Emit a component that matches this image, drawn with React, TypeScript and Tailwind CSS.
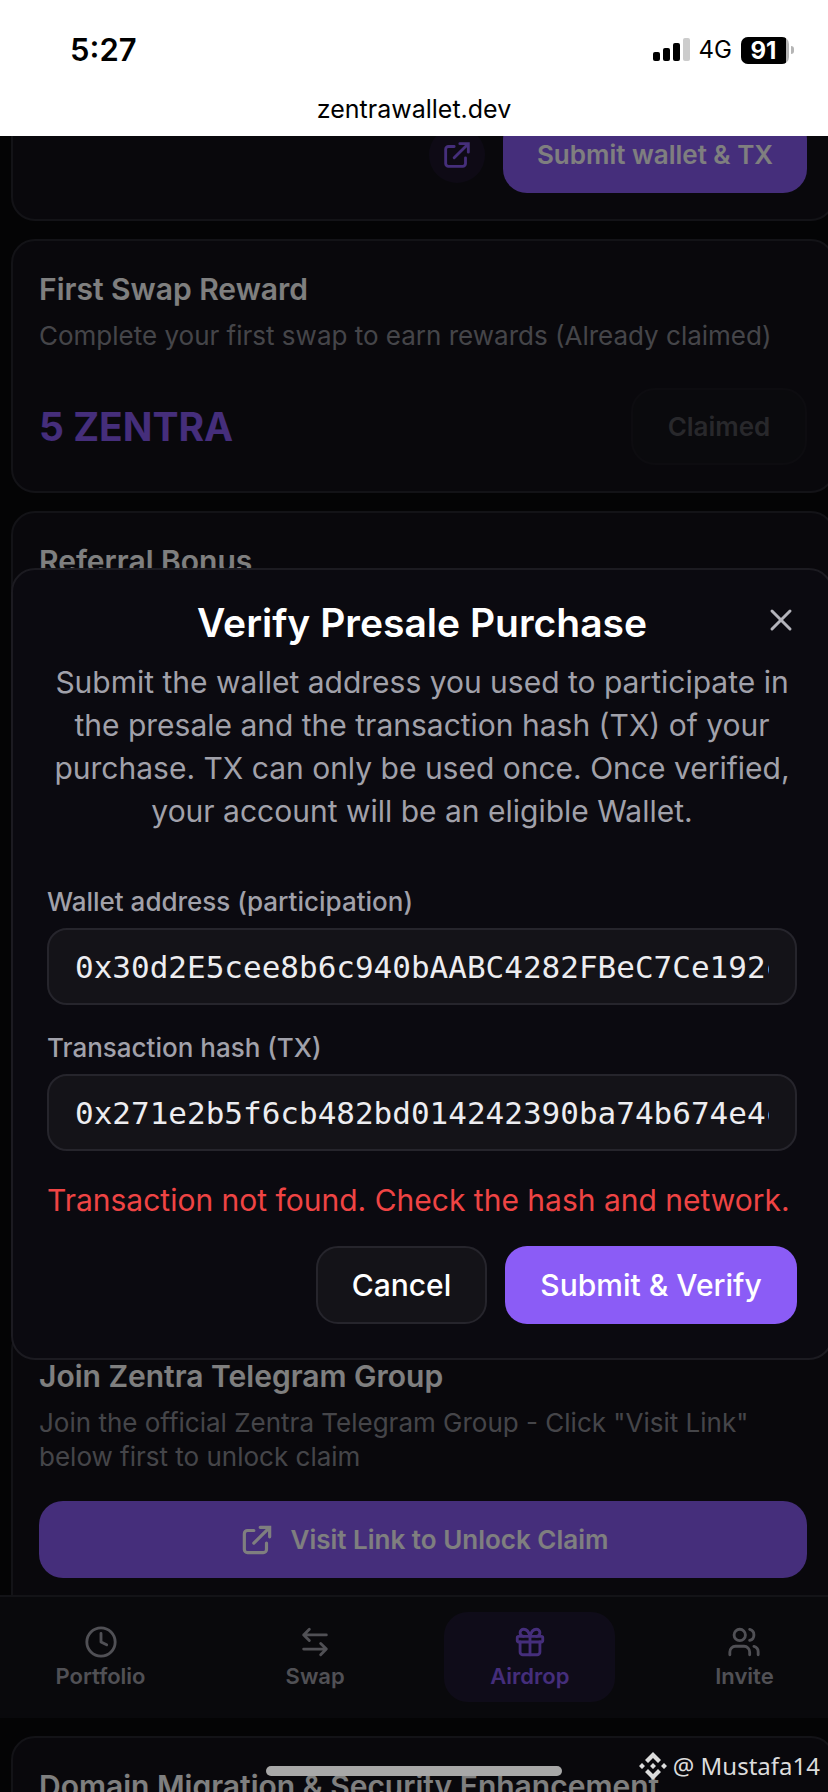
import type { ReactNode } from 'react';
import { Clock, Gift, Users, X } from 'lucide-react';

const FIELDS = [
  { id: 'wallet', label: 'Wallet address (participation)', value: '0x30d2E5cee8b6c940bAABC4282FBeC7Ce192c' },
  { id: 'tx', label: 'Transaction hash (TX)', value: '0x271e2b5f6cb482bd014242390ba74b674e4c' },
];

function ExternalLinkIcon({ className }: { className: string }) {
  return (
    <svg viewBox="0 0 24 24" fill="none" stroke="currentColor" strokeWidth="2" strokeLinecap="round" className={className}>
      <path d="M10 6H6a2 2 0 0 0-2 2v10a2 2 0 0 0 2 2h10a2 2 0 0 0 2-2v-4M14 4h6v6m0-6L10 14" />
    </svg>
  );
}

function SwapIcon({ className }: { className: string }) {
  return (
    <svg viewBox="0 0 24 24" fill="none" stroke="currentColor" strokeWidth="2" strokeLinecap="round" strokeLinejoin="round" className={className}>
      <path d="M20 7H4m0 0 4-4M4 7l4 4M4 17h16m0 0-4-4m4 4-4 4" />
    </svg>
  );
}

function StatusBar() {
  return (
    <header className="shrink-0 h-[136px] bg-white text-black flex flex-col">
      <div className="flex items-center justify-between pt-[32px] pl-[70px] pr-[34px]">
        <p className="text-[31px] leading-[36px] font-semibold">5:27</p>
        <div className="flex items-center">
          <svg viewBox="0 0 37 24" className="w-[37px] h-[24px]">
            <rect x="0" y="14" width="7" height="9" rx="2" />
            <rect x="10" y="10" width="7" height="13" rx="2" />
            <rect x="20" y="5" width="7" height="18" rx="2" />
            <rect x="30" y="0" width="7" height="23" rx="2" fill="#cccccc" />
          </svg>
          <span className="ml-[9px] text-[24px] leading-[28px]">4G</span>
          <div className="ml-[9px] w-[48px] h-[27px] rounded-[7px] overflow-hidden bg-[#b5b5b5]">
            <div className="w-[45px] h-full bg-black text-white text-center text-[24px] leading-[27px] font-bold">91</div>
          </div>
          <span className="ml-[2px] w-[3px] h-[8px] rounded-r-full bg-[#b5b5b5]" />
        </div>
      </div>
      <p className="mt-[25px] text-center text-[25px] leading-[32px]">zentrawallet.dev</p>
    </header>
  );
}

function Card({ title, className, children }: { title?: string; className?: string; children?: ReactNode }) {
  return (
    <section className={`rounded-[24px] border-2 border-[#27262e] bg-[#121119] px-[26px] pt-[30px] pb-[26px] ${className ?? ''}`}>
      {title && <h2 className="text-[30px] leading-[36px] font-semibold text-white">{title}</h2>}
      {children}
    </section>
  );
}

function NavItem({ label, active, children }: { label: string; active?: boolean; children: ReactNode }) {
  return (
    <a
      href="#"
      className={`w-[171px] h-[90px] rounded-[24px] flex flex-col items-center justify-center gap-[4px] text-[22px] leading-[26px] font-semibold ${
        active ? 'bg-[#1f1932] text-[#8b5cf6]' : 'text-[#a1a1aa]'
      }`}
    >
      {children}
      {label}
    </a>
  );
}

function VerifyDialog() {
  return (
    <div role="dialog" aria-labelledby="verify-title" className="relative w-full rounded-[24px] border-2 border-[#1c1b21] bg-[#0b0a10] p-[34px]">
      <h2 id="verify-title" className="text-center text-[39px] leading-[38px] font-semibold text-white">
        Verify Presale Purchase
      </h2>
      <button type="button" aria-label="Close" className="absolute right-[32px] top-[32px] text-[#b4b4bb]">
        <X className="w-[36px] h-[36px]" strokeWidth={2} />
      </button>
      <p className="mt-[19px] text-center text-[30px] leading-[43px] text-[#a1a1aa]">
        Submit the wallet address you used to participate in the presale and the transaction hash (TX) of your purchase. TX can only be used once. Once verified, your account will be an eligible Wallet.
      </p>
      <form className="mt-[56px]">
        <div className="flex flex-col gap-[30px]">
          {FIELDS.map((field) => (
            <div key={field.id}>
              <label htmlFor={field.id} className="block text-[26px] leading-[26px] font-medium text-[#a1a1aa]">
                {field.label}
              </label>
              <input
                id={field.id}
                type="text"
                defaultValue={field.value}
                className="mt-[13px] block w-full h-[77px] rounded-[20px] border-2 border-[#26252c] bg-[#141318] px-[26px] font-['DejaVu_Sans_Mono',monospace] text-[31px] text-[#ededf0] outline-none"
              />
            </div>
          ))}
        </div>
        <p className="mt-[28px] text-[30px] leading-[43px] text-[#ef4444] whitespace-nowrap">Transaction not found. Check the hash and network.</p>
        <div className="mt-[24px] flex justify-end gap-[18px]">
          <button type="button" className="h-[78px] w-[171px] rounded-[22px] border-2 border-[#26252c] bg-[#141318] text-[30px] font-medium text-white">
            Cancel
          </button>
          <button type="button" className="h-[78px] w-[292px] rounded-[22px] bg-[#8b5cf6] text-[30px] font-medium text-white">
            Submit &amp; Verify
          </button>
        </div>
      </form>
    </div>
  );
}

export default function App() {
  return (
    <div className="h-screen flex flex-col overflow-hidden bg-[#08080b] font-['Inter',sans-serif]">
      <StatusBar />

      <main className="relative flex-1 min-h-0 overflow-hidden">
        <div className="-mt-[60px] ml-[11px] -mr-[7px] flex flex-col gap-[18px]">
          <Card>
            <div className="flex items-center justify-end gap-[18px] pt-[8px]">
              <a href="#" aria-label="Open presale" className="w-[56px] h-[56px] rounded-full bg-[#1c152b] text-[#8b5cf6] flex items-center justify-center">
                <ExternalLinkIcon className="w-[34px] h-[34px]" />
              </a>
              <button type="button" className="h-[77px] w-[304px] rounded-[24px] bg-[#8b5cf6] text-[26px] font-semibold text-white">
                Submit wallet &amp; TX
              </button>
            </div>
          </Card>

          <Card title="First Swap Reward">
            <p className="mt-[12px] text-[26px] leading-[34px] text-[#8b8b93]">Complete your first swap to earn rewards (Already claimed)</p>
            <div className="mt-[35px] flex items-center justify-between">
              <p className="text-[39px] leading-[42px] font-bold text-[#8b5cf6]">5 ZENTRA</p>
              <button type="button" disabled className="h-[77px] w-[176px] rounded-[24px] border-2 border-[#1a1920] bg-[#15141b] text-[26px] font-semibold text-[#505057]">
                Claimed
              </button>
            </div>
          </Card>

          <Card title="Referral Bonus" className="h-[797px]" />

          <Card title="Join Zentra Telegram Group" className="h-[392px]">
            <p className="mt-[12px] text-[26px] leading-[34px] text-[#8b8b93]">
              Join the official Zentra Telegram Group - Click "Visit Link" below first to unlock claim
            </p>
            <button type="button" className="mt-[27px] h-[77px] w-full rounded-[24px] bg-[#8b5cf6] text-[26px] font-semibold text-white flex items-center justify-center gap-[15px]">
              <ExternalLinkIcon className="w-[38px] h-[38px]" />
              Visit Link to Unlock Claim
            </button>
          </Card>

          <Card title="Domain Migration & Security Enhancement" />
        </div>

        <nav className="absolute inset-x-0 bottom-[74px] h-[123px] border-t-2 border-[#27262e] bg-[#131219] overflow-hidden">
          <div className="-mr-[17px] px-[15px] pt-[15px] flex justify-between">
            <NavItem label="Portfolio">
              <Clock className="w-[34px] h-[34px]" />
            </NavItem>
            <NavItem label="Swap">
              <SwapIcon className="w-[34px] h-[34px]" />
            </NavItem>
            <NavItem label="Airdrop" active>
              <Gift className="w-[34px] h-[34px]" />
            </NavItem>
            <NavItem label="Invite">
              <Users className="w-[34px] h-[34px]" />
            </NavItem>
          </div>
        </nav>

        <div className="absolute inset-y-0 left-0 -right-[5px] flex items-center bg-black/50 pl-[11px]">
          <VerifyDialog />
        </div>

        <div className="absolute bottom-[16px] left-1/2 w-[296px] -translate-x-1/2 h-[10px] rounded-full bg-[#a8a8a8]" />

        <div className="absolute bottom-[9px] right-[8px] flex items-center gap-[6px] text-[#dcdcdc]">
          <svg viewBox="0 0 28 28" fill="currentColor" className="w-[28px] h-[28px]">
            <path d="M14 0 22 8 19 11 14 6 9 11 6 8ZM14 28 22 20 19 17 14 22 9 17 6 20ZM14 11 17 14 14 17 11 14ZM3 11 6 14 3 17 0 14ZM25 11 28 14 25 17 22 14Z" />
          </svg>
          <span className="font-['Noto_Sans',sans-serif] text-[24px] leading-[34px]">@ Mustafa14</span>
        </div>
      </main>
    </div>
  );
}
